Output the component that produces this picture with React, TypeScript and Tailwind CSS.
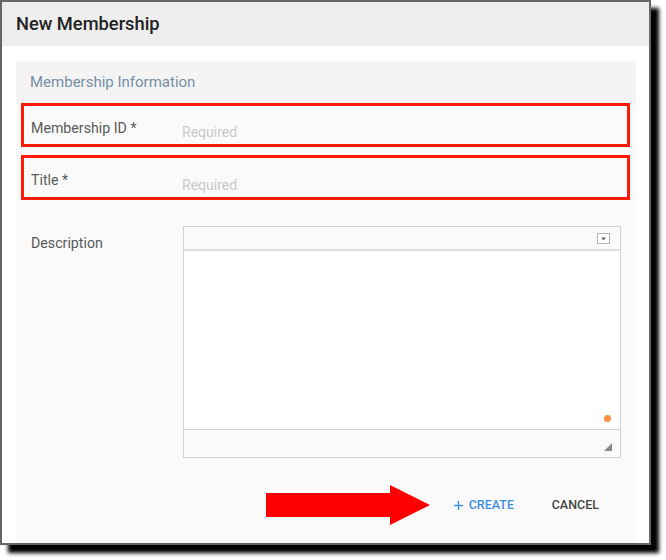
import React from "react";

export default function App() {
  const font = { fontFamily: "Roboto, 'Liberation Sans', sans-serif" };
  return (
    <div className="w-[666px] h-[560px] bg-white" style={font}>
      <div className="w-[651px] h-[545px] border-2 border-[#666666] bg-white flex flex-col shadow-[8px_8px_4px_rgba(0,0,0,1)]">
        <div className="h-[44px] shrink-0 bg-[#eeeeee] flex items-center pl-[14px]">
          <span className="text-[18.3px] font-medium text-[#222222]">New Membership</span>
        </div>
        <div className="flex-1 flex flex-col pt-[15px] pl-[14px] pr-[13px]">
          <div className="flex-1 flex flex-col bg-[#fafafa]">
            <div className="h-[43px] shrink-0 bg-[#f4f4f4] flex items-center pl-[14px]">
              <span className="text-[15px] text-[#7590a5]">Membership Information</span>
            </div>
            <div className="mt-[-1px] ml-[5px] mr-[6px] h-[44px] border-[3px] border-[#ff1a0a] flex items-center pl-[7px] pt-[7px]">
              <span className="w-[151px] text-[14.2px] text-[#595959]">Membership ID *</span>
              <span className="text-[14px] text-[#c9c9c9] pt-[8px]">Required</span>
            </div>
            <div className="mt-[8px] ml-[5px] mr-[6px] h-[45px] border-[3px] border-[#ff1a0a] flex items-center pl-[7px] pt-[7px]">
              <span className="w-[151px] text-[14.2px] text-[#595959]">Title *</span>
              <span className="text-[14px] text-[#c9c9c9] pt-[8px]">Required</span>
            </div>
            <div className="mt-[26px] flex pl-[15px] pr-[15px]">
              <span className="w-[152px] pt-[7px] text-[14.2px] text-[#595959]">Description</span>
              <div className="flex-1 flex flex-col border border-[#d2d2d2] h-[232px]">
                <div className="h-[24px] bg-[#fafafa] border-b-2 border-[#e0e0e0] flex items-center justify-end pr-[10px] pt-[1px]">
                  <div className="w-[13px] h-[11px] border border-[#b5b5b5] bg-white flex items-center justify-center">
                    <svg width="5" height="4" viewBox="0 0 5 4">
                      <path d="M0 0.5 L5 0.5 L2.5 3.5 Z" fill="#666" />
                    </svg>
                  </div>
                </div>
                <div className="flex-1 bg-white flex items-end justify-end pr-[9px] pb-[7px]">
                  <div className="w-[7px] h-[7px] rounded-full bg-[#ff9040]" />
                </div>
                <div className="h-[28px] bg-[#fafafa] border-t border-[#d6d6d6] flex items-end justify-end pr-[8px] pb-[6px]">
                  <svg width="8" height="8" viewBox="0 0 8 8">
                    <path d="M8 0 L8 8 L0 8 Z" fill="#8a8a8a" />
                  </svg>
                </div>
              </div>
            </div>
            <div className="mt-[27px] flex items-center justify-end pr-[37px]">
              <svg width="164" height="40" viewBox="0 0 164 40" className="mr-[24px]">
                <path d="M0 8 L124 8 L124 0 L164 20 L124 40 L124 32 L0 32 Z" fill="#ff0000" />
              </svg>
              <span className="w-[60px] flex items-center justify-between text-[#3d8fdc] text-[12.5px] font-medium whitespace-nowrap">
                <svg width="9" height="9" viewBox="0 0 9 9" className="mt-[1px] shrink-0">
                  <path d="M4.5 0 V9 M0 4.5 H9" stroke="#3d8fdc" strokeWidth="1.3" />
                </svg>
                <span>CREATE</span>
              </span>
              <span className="ml-[38px] w-[47px] flex justify-end text-[#444444] text-[12.5px] font-medium whitespace-nowrap">CANCEL</span>
            </div>
          </div>
        </div>
      </div>
    </div>
  );
}
